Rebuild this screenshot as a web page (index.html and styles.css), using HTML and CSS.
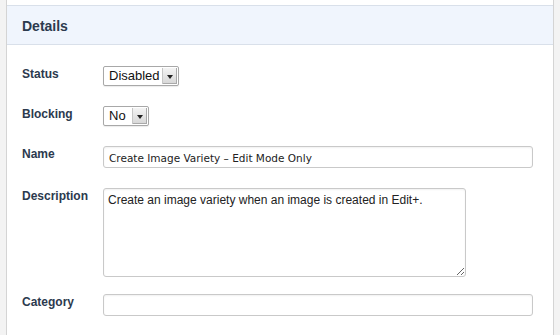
FILE: index.html
```html
<!DOCTYPE html>
<html>
<head>
<meta charset="utf-8">
<link rel="stylesheet" href="styles.css">
</head>
<body>
<div class="panel">
  <div class="top-gap"></div>
  <div class="header"><h2>Details</h2></div>
  <div class="form">
    <div class="row">
      <label class="label">Status</label>
      <div class="select sel-status"><span class="val">Disabled</span><span class="arrow"></span></div>
    </div>
    <div class="row">
      <label class="label">Blocking</label>
      <div class="select sel-block"><span class="val">No</span><span class="arrow"></span></div>
    </div>
    <div class="row">
      <label class="label">Name</label>
      <input class="text" type="text" value="Create Image Variety – Edit Mode Only">
    </div>
    <div class="row">
      <label class="label">Description</label>
      <textarea class="area">Create an image variety when an image is created in Edit+.</textarea>
    </div>
    <div class="row">
      <label class="label">Category</label>
      <input class="text" type="text" value="">
    </div>
  </div>
</div>
</body>
</html>
```
FILE: styles.css
```css
html, body {
  margin: 0;
  padding: 0;
  background: #f3f3f3;
  height: 100%;
}
body {
  font-family: "Liberation Sans", Arial, sans-serif;
  overflow: hidden;
}
.panel {
  margin-left: 6px;
  width: 546px;
  min-height: 335px;
  background: #fff;
  border-left: 1px solid #d4d4d4;
  border-right: 1px solid #d4d4d4;
}
.top-gap {
  height: 5px;
}
.header {
  height: 37px;
  background: #f0f5fd;
  border-top: 1px solid #d9e0ea;
  border-bottom: 1px solid #d9e0ea;
  display: flex;
  align-items: center;
  padding-left: 15px;
  padding-top: 1px;
  box-sizing: content-box;
}
.header h2 {
  margin: 0;
  font-size: 14px;
  font-weight: bold;
  color: #2c3a4e;
}
.form {
  padding: 21px 0 0 15px;
}
.row {
  display: flex;
  align-items: flex-start;
  margin-bottom: 20px;
}
.label {
  width: 81px;
  flex: none;
  font-size: 12px;
  font-weight: bold;
  color: #2c3a4e;
  line-height: 14px;
  padding-top: 1px;
}
.select {
  display: flex;
  align-items: stretch;
  height: 18px;
  border: 1px solid #a8a8a8;
  border-radius: 2px;
  background: #fff;
  box-shadow: 0 1px 1px rgba(0,0,0,0.08);
  font-size: 13px;
  color: #111;
}
.sel-status { width: 74px; }
.sel-block { width: 44px; }
.select .val {
  flex: 1;
  padding-left: 5px;
  line-height: 18px;
}
.select .arrow {
  width: 14px;
  margin: 1px 1px 1px 0;
  background: linear-gradient(#f4f4f4, #d6d6d6);
  border-left: 1px solid #c6c6c6;
  box-shadow: inset -1px -1px 0 #a9a9a9;
  position: relative;
}
.select .arrow::after {
  content: "";
  position: absolute;
  left: 4px;
  top: 7px;
  border-left: 3px solid transparent;
  border-right: 3px solid transparent;
  border-top: 4px solid #222;
}
.text {
  box-sizing: border-box;
  width: 430px;
  height: 22px;
  margin: 0;
  padding: 2px 5px 0;
  border: 1px solid #c9c9c9;
  border-radius: 3px;
  box-shadow: inset 0 1px 2px rgba(0,0,0,0.06);
  font-family: "DejaVu Sans", sans-serif;
  font-size: 10.5px;
  color: #222;
  outline: none;
}
.area {
  box-sizing: border-box;
  width: 363px;
  height: 89px;
  margin: 0 0 -3px 0;
  padding: 4px 4px;
  border: 1px solid #c9c9c9;
  border-radius: 3px;
  box-shadow: inset 0 1px 2px rgba(0,0,0,0.06);
  font-family: "Liberation Sans", Arial, sans-serif;
  font-size: 12px;
  color: #222;
  resize: both;
  outline: none;
}
```
